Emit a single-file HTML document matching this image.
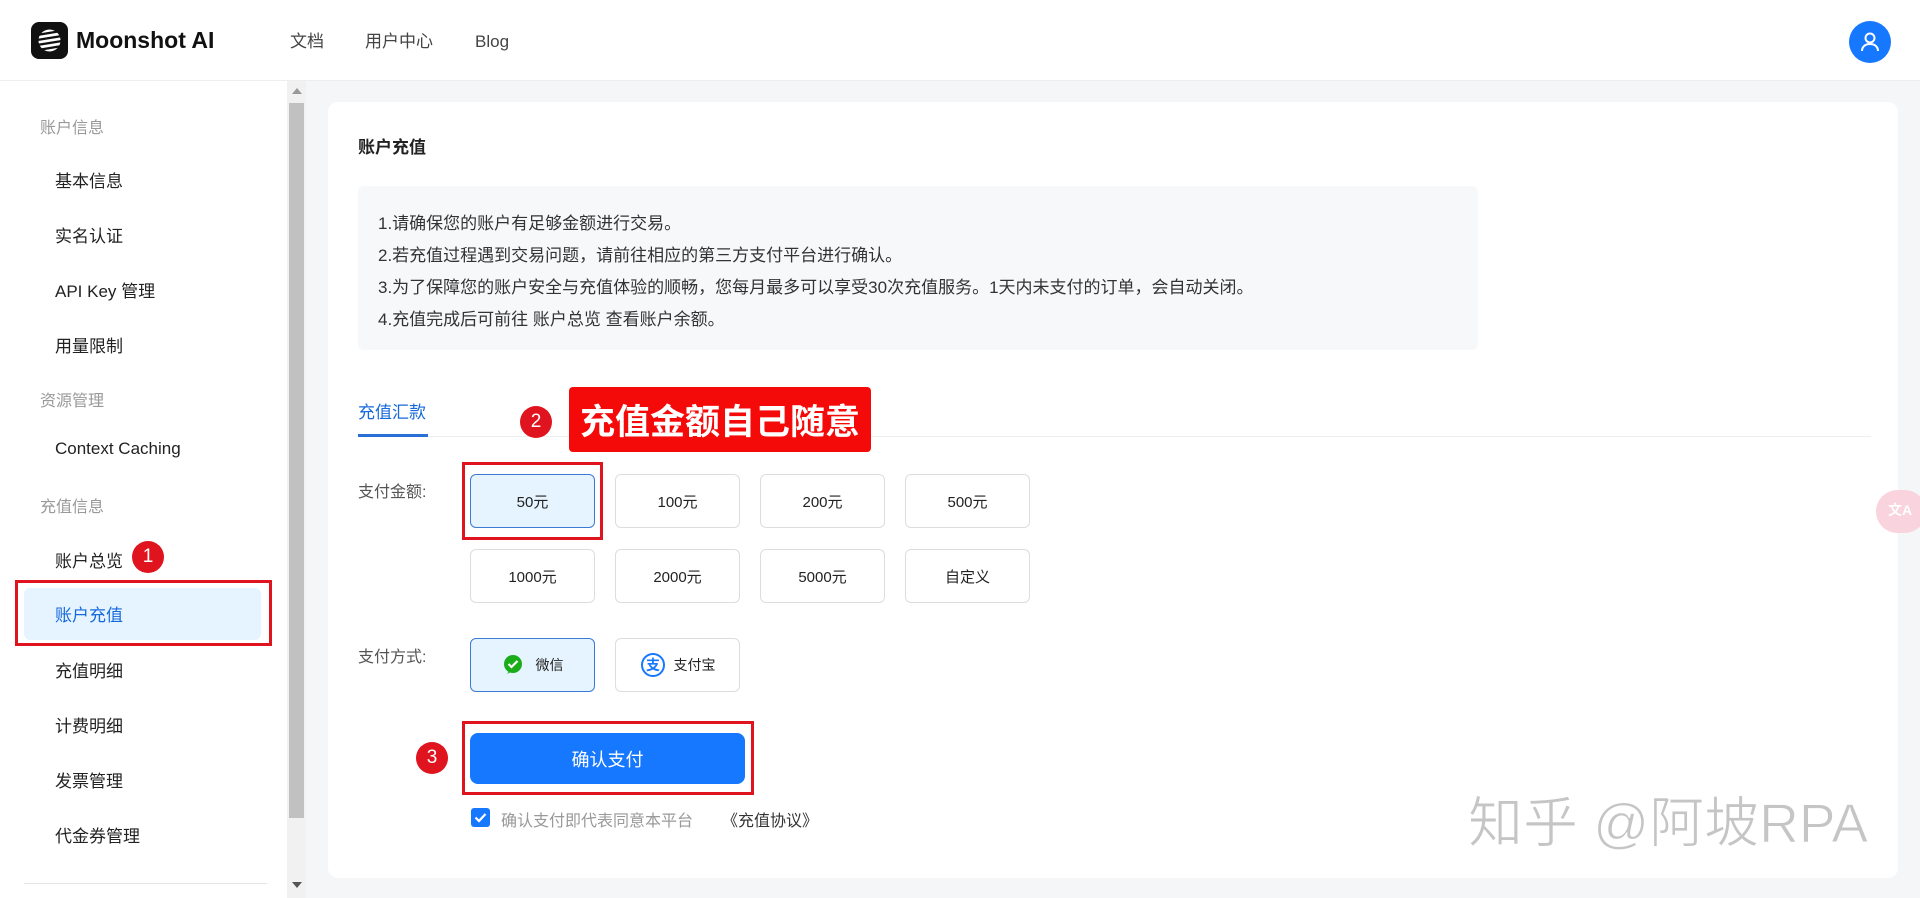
<!DOCTYPE html>
<html><head><meta charset="utf-8"><style>
*{margin:0;padding:0;box-sizing:border-box}
body{width:1920px;height:898px;overflow:hidden;background:#f5f6f7;font-family:"Liberation Sans","Noto Sans CJK SC",sans-serif;color:#222;position:relative}
.abs{position:absolute}
.hdr{left:0;top:0;width:1920px;height:81px;background:#fff;border-bottom:1px solid #eee}
.nav{font-size:17px;color:#444;top:32px;line-height:20px}
.side{left:0;top:81px;width:287px;height:817px;background:#fff}
.g{left:40px;font-size:16px;color:#999}
.it{left:55px;font-size:17px;color:#222}
.btn{width:125px;height:54px;border:1px solid #ddd;border-radius:6px;background:#fff;display:flex;align-items:center;justify-content:center;font-size:15px;color:#222}
.sel{background:#e6f4ff;border-color:#3a7bd5}
.rb{border:3px solid #e0141e}
.circ{width:32px;height:32px;border-radius:50%;background:#e0141e;color:#fff;display:flex;align-items:center;justify-content:center;font-size:19px}
.lbl{font-size:16px;color:#555}
.nt{left:378px;font-size:17px;color:#333}
</style></head><body>
<div class="abs hdr"></div>
<svg class="abs" style="left:31px;top:22px" width="37" height="37" viewBox="0 0 37 37"><rect width="37" height="37" rx="8" fill="#111"/><circle cx="18.5" cy="18.5" r="11" fill="#fff"/><g stroke="#111" stroke-width="2.2"><path d="M6 13 L30 9"/><path d="M6 18 L31 14"/><path d="M6 23 L31 19"/><path d="M7 28 L31 24"/></g></svg>
<div class="abs" style="left:76px;top:26px;font-size:23px;font-weight:bold;color:#111;line-height:28px">Moonshot AI</div>
<div class="abs nav" style="left:290px">文档</div>
<div class="abs nav" style="left:365px">用户中心</div>
<div class="abs nav" style="left:475px">Blog</div>
<div class="abs" style="left:1849px;top:21px;width:42px;height:42px;border-radius:50%;background:#1677ff"></div>
<svg class="abs" style="left:1858px;top:30px" width="24" height="24" viewBox="0 0 24 24" fill="none" stroke="#fff" stroke-width="2"><circle cx="12" cy="8" r="4.5"/><path d="M4 21c0-4.5 3.5-7 8-7s8 2.5 8 7"/></svg>
<div class="abs side"></div>
<div class="abs" style="left:287px;top:81px;width:19px;height:817px;background:#f1f1f1"></div>
<div class="abs" style="left:289px;top:103px;width:15px;height:715px;background:#c1c1c1"></div>
<div class="abs" style="left:292px;top:88px;width:0;height:0;border-left:5px solid transparent;border-right:5px solid transparent;border-bottom:6px solid #999"></div>
<div class="abs" style="left:292px;top:882px;width:0;height:0;border-left:5px solid transparent;border-right:5px solid transparent;border-top:6px solid #555"></div>
<div class="abs g" style="top:114px">账户信息</div>
<div class="abs it" style="top:167px">基本信息</div>
<div class="abs it" style="top:222px">实名认证</div>
<div class="abs it" style="top:277px">API Key 管理</div>
<div class="abs it" style="top:332px">用量限制</div>
<div class="abs g" style="top:387px">资源管理</div>
<div class="abs it" style="top:439px">Context Caching</div>
<div class="abs g" style="top:493px">充值信息</div>
<div class="abs it" style="top:547px">账户总览</div>
<div class="abs circ" style="left:132px;top:541px">1</div>
<div class="abs" style="left:24px;top:588px;width:237px;height:52px;background:#e6f4ff;border-radius:6px"></div>
<div class="abs it" style="top:601px;color:#1668dc">账户充值</div>
<div class="abs rb" style="left:15px;top:580px;width:257px;height:66px"></div>
<div class="abs it" style="top:657px">充值明细</div>
<div class="abs it" style="top:712px">计费明细</div>
<div class="abs it" style="top:767px">发票管理</div>
<div class="abs it" style="top:822px">代金券管理</div>
<div class="abs" style="left:24px;top:883px;width:243px;height:1px;background:#e5e5e5"></div>

<div class="abs" style="left:328px;top:102px;width:1570px;height:776px;background:#fff;border-radius:10px"></div>
<div class="abs" style="left:358px;top:133px;font-size:17px;font-weight:bold">账户充值</div>
<div class="abs" style="left:358px;top:186px;width:1120px;height:164px;background:#f7f8fa;border-radius:6px"></div>
<div class="abs nt" style="top:209px">1.请确保您的账户有足够金额进行交易。</div>
<div class="abs nt" style="top:241px">2.若充值过程遇到交易问题，请前往相应的第三方支付平台进行确认。</div>
<div class="abs nt" style="top:273px">3.为了保障您的账户安全与充值体验的顺畅，您每月最多可以享受30次充值服务。1天内未支付的订单，会自动关闭。</div>
<div class="abs nt" style="top:305px">4.充值完成后可前往 账户总览 查看账户余额。</div>
<div class="abs" style="left:358px;top:398px;font-size:17px;color:#1668dc">充值汇款</div>
<div class="abs" style="left:358px;top:436px;width:1513px;height:1px;background:#eee"></div>
<div class="abs" style="left:358px;top:434px;width:70px;height:3px;background:#2a6fd6"></div>
<div class="abs circ" style="left:520px;top:406px">2</div>
<div class="abs" style="left:569px;top:387px;width:302px;height:65px;background:#f50a0a;border-radius:4px;color:#fff;font-weight:bold;font-size:35px;display:flex;align-items:center;justify-content:center">充值金额自己随意</div>
<div class="abs lbl" style="left:358px;top:478px">支付金额:</div>
<div class="abs btn sel" style="left:470px;top:474px">50元</div>
<div class="abs btn" style="left:615px;top:474px">100元</div>
<div class="abs btn" style="left:760px;top:474px">200元</div>
<div class="abs btn" style="left:905px;top:474px">500元</div>
<div class="abs btn" style="left:470px;top:549px">1000元</div>
<div class="abs btn" style="left:615px;top:549px">2000元</div>
<div class="abs btn" style="left:760px;top:549px">5000元</div>
<div class="abs btn" style="left:905px;top:549px">自定义</div>
<div class="abs rb" style="left:462px;top:462px;width:141px;height:78px"></div>
<div class="abs lbl" style="left:358px;top:643px">支付方式:</div>
<div class="abs btn sel" style="left:470px;top:638px;font-size:14px"><svg width="22" height="22" viewBox="0 0 22 22" style="margin-right:12px"><circle cx="11" cy="10" r="9" fill="#1aad19"/><path d="M5 20l3-4 3 1z" fill="#1aad19"/><path d="M6.5 10l3 3 6-6" stroke="#fff" stroke-width="2.2" fill="none"/></svg>微信</div>
<div class="abs btn" style="left:615px;top:638px;font-size:14px"><svg width="26" height="26" viewBox="0 0 26 26" style="margin-right:8px"><circle cx="13" cy="13" r="11" fill="#fff" stroke="#1677ff" stroke-width="2"/><text x="13" y="18" font-size="14" text-anchor="middle" fill="#1677ff" font-family="Noto Sans CJK SC" font-weight="bold">支</text></svg>支付宝</div>
<div class="abs" style="left:470px;top:733px;width:275px;height:51px;background:#1677ff;border-radius:8px;color:#fff;font-size:18px;display:flex;align-items:center;justify-content:center">确认支付</div>
<div class="abs rb" style="left:462px;top:721px;width:292px;height:74px"></div>
<div class="abs circ" style="left:416px;top:742px">3</div>
<div class="abs" style="left:471px;top:808px;width:19px;height:19px;background:#1677ff;border-radius:3px"></div>
<svg class="abs" style="left:471px;top:808px" width="19" height="19" viewBox="0 0 19 19"><path d="M4.5 9.5l3.5 3.5 6.5-7" stroke="#fff" stroke-width="2.2" fill="none"/></svg>
<div class="abs" style="left:501px;top:807px;font-size:16px;color:#999">确认支付即代表同意本平台</div>
<div class="abs" style="left:722px;top:807px;font-size:16px;color:#333">《充值协议》</div>
<div class="abs" style="left:1468px;top:778px;font-size:55px;color:#bbb;opacity:.85;-webkit-text-stroke:1px #fff;white-space:nowrap">知乎 @阿坡RPA</div>
<div class="abs" style="left:1876px;top:490px;width:50px;height:43px;border-radius:22px;background:#f9d3dd;color:#fff;font-size:14px;padding:12px 0 0 12px;font-weight:bold;line-height:1.2">文A</div>
</body></html>
